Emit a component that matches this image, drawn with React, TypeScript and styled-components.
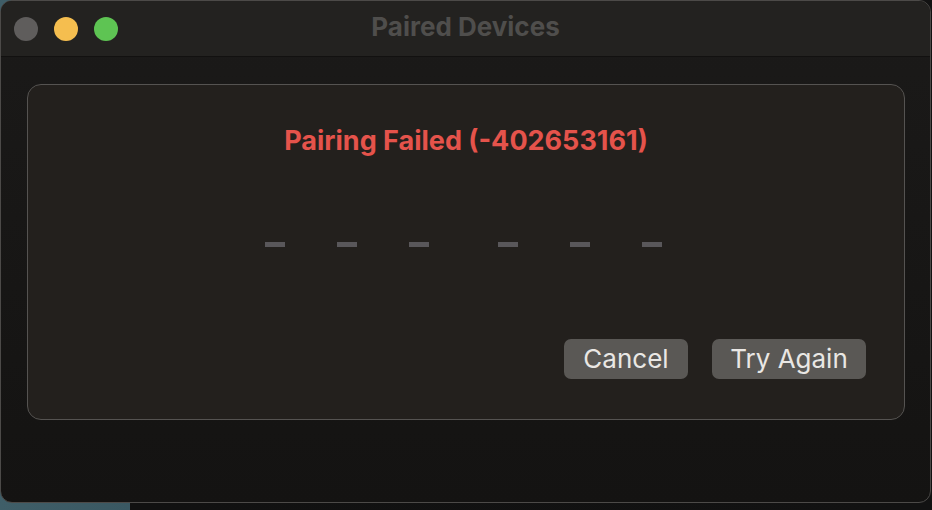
import React from "react";
import styled, { createGlobalStyle } from "styled-components";

const Global = createGlobalStyle`
  html, body { margin: 0; padding: 0; }
  body {
    width: 932px; height: 510px; overflow: hidden;
    font-family: Inter, "Noto Sans", "Liberation Sans", sans-serif;
    -webkit-font-smoothing: antialiased;
  }
`;

const Desktop = styled.div`
  width: 932px;
  height: 510px;
  background: linear-gradient(90deg, #3f5e68 0, #3a5862 130px, #111111 130px, #121212 100%);
  display: flex;
  flex-direction: column;
`;

const Window = styled.div`
  width: 931px;
  height: 503px;
  box-sizing: border-box;
  border: 1px solid #4c4a48;
  border-radius: 12px;
  overflow: hidden;
  background: linear-gradient(180deg, #1b1a19 0%, #141312 100%);
  display: flex;
  flex-direction: column;
`;

const TitleBar = styled.div`
  height: 55px;
  flex: none;
  background: #232220;
  border-bottom: 1px solid #121110;
  display: flex;
  align-items: center;
  position: relative;
  padding-left: 13px;
  gap: 16px;
`;

const Light = styled.div<{ $c: string }>`
  width: 24px;
  height: 24px;
  border-radius: 50%;
  background: ${(p) => p.$c};
`;

const Title = styled.div`
  position: absolute;
  left: 0;
  right: 0;
  top: 0;
  bottom: 4px;
  display: flex;
  align-items: center;
  justify-content: center;
  font-size: 26px;
  font-weight: 700;
  color: #4f4e4c;
  pointer-events: none;
`;

const Body = styled.div`
  flex: 1;
  padding: 27px 25px 0 26px;
`;

const Panel = styled.div`
  height: 336px;
  box-sizing: border-box;
  border: 1.5px solid #555351;
  border-radius: 14px;
  background: #23201d;
  display: flex;
  flex-direction: column;
  align-items: center;
`;

const ErrorText = styled.div`
  margin-top: 39px;
  font-size: 27px;
  font-weight: 700;
  color: #e5534b;
  line-height: 34px;
`;

const CodeRow = styled.div`
  margin-top: 84px;
  display: flex;
  gap: 69px;
  margin-left: -6px;
`;

const Group = styled.div`
  display: flex;
  gap: 52px;
`;

const Dash = styled.div`
  width: 20px;
  height: 5px;
  background: #59575a;
`;

const Buttons = styled.div`
  align-self: stretch;
  margin-top: 92px;
  display: flex;
  justify-content: flex-end;
  gap: 24px;
  padding-right: 38px;
`;

const Button = styled.div<{ $w: number }>`
  width: ${(p) => p.$w}px;
  height: 40px;
  border-radius: 7px;
  background: #5a5855;
  color: #e9e7e4;
  font-size: 26px;
  display: flex;
  align-items: center;
  justify-content: center;
  box-sizing: border-box;
  padding-bottom: 2px;
`;

export default function App() {
  return (
    <>
      <Global />
      <Desktop>
        <Window>
          <TitleBar>
            <Light $c="#5f5d5c" />
            <Light $c="#f5be4f" />
            <Light $c="#5ec453" />
            <Title>Paired Devices</Title>
          </TitleBar>
          <Body>
            <Panel>
              <ErrorText>Pairing Failed (-402653161)</ErrorText>
              <CodeRow>
                <Group>
                  <Dash />
                  <Dash />
                  <Dash />
                </Group>
                <Group>
                  <Dash />
                  <Dash />
                  <Dash />
                </Group>
              </CodeRow>
              <Buttons>
                <Button $w={124}>Cancel</Button>
                <Button $w={154}>Try Again</Button>
              </Buttons>
            </Panel>
          </Body>
        </Window>
      </Desktop>
    </>
  );
}
